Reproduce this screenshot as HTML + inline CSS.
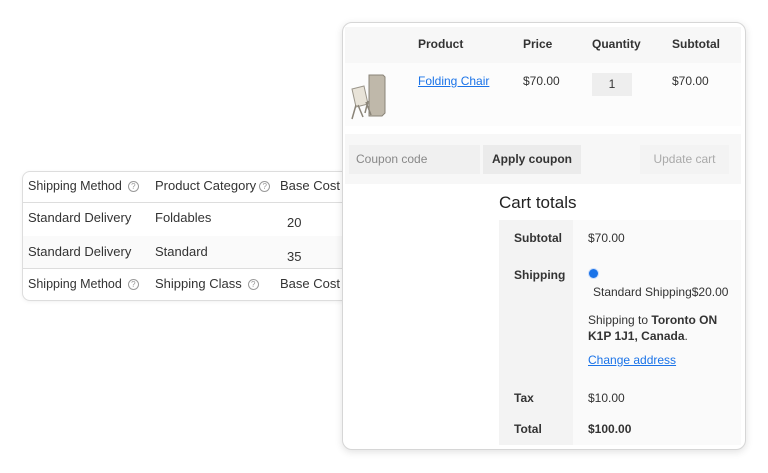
<!DOCTYPE html><html><head><style>
*{margin:0;padding:0;box-sizing:border-box}
body{width:768px;height:473px;background:#fff;position:relative;overflow:hidden;font-family:"Liberation Sans",Arial,sans-serif;color:#333;font-size:12px}
.a{position:absolute;white-space:nowrap}
.q{display:inline-block;width:11px;height:11px;border:1px solid #999;border-radius:50%;font-size:8px;line-height:9px;text-align:center;color:#999;vertical-align:1px;margin-left:6px}
.b{font-weight:bold}
a{color:#1a73e8;text-decoration:underline}
</style></head><body>
<div class="a" style="left:22px;top:171px;width:340px;height:130px;border:1px solid #ddd;border-radius:8px;background:#fff;box-shadow:0 1px 4px rgba(0,0,0,.06);font-size:13px">
 <div class="a" style="left:0;top:30px;width:340px;border-top:1px solid #ddd"></div>
 <div class="a" style="left:0;top:64px;width:340px;height:33px;background:#fafafa"></div>
 <div class="a" style="left:0;top:96px;width:340px;border-top:1px solid #ddd"></div>
 <div class="a" style="left:5px;top:7px;font-size:12.5px">Shipping Method<span class="q">?</span></div>
 <div class="a" style="left:132px;top:6px">Product Category<span class="q" style="margin-left:3px">?</span></div>
 <div class="a" style="left:257px;top:6px">Base Cost</div>
 <div class="a" style="left:5px;top:38px">Standard Delivery</div>
 <div class="a" style="left:132px;top:38px">Foldables</div>
 <div class="a" style="left:264px;top:43px">20</div>
 <div class="a" style="left:5px;top:72px">Standard Delivery</div>
 <div class="a" style="left:132px;top:72px">Standard</div>
 <div class="a" style="left:264px;top:77px">35</div>
 <div class="a" style="left:5px;top:105px;font-size:12.5px">Shipping Method<span class="q">?</span></div>
 <div class="a" style="left:132px;top:104px">Shipping Class<span class="q">?</span></div>
 <div class="a" style="left:257px;top:104px">Base Cost</div>
</div>
<div class="a" style="left:342px;top:22px;width:404px;height:428px;border:1px solid #d6d6d6;border-radius:10px;background:#fff;box-shadow:0 2px 8px rgba(0,0,0,.12)">
 <div class="a" style="left:2px;top:4px;width:396px;height:36px;background:#f7f7f7"></div>
 <div class="a" style="left:2px;top:40px;width:396px;height:63px;background:#fcfcfc"></div>
 <div class="a" style="left:2px;top:111px;width:396px;height:50px;background:#f7f7f7"></div>
 <div class="a b" style="left:75px;top:14px">Product</div>
 <div class="a b" style="left:180px;top:14px">Price</div>
 <div class="a b" style="left:249px;top:14px">Quantity</div>
 <div class="a b" style="left:329px;top:14px">Subtotal</div>
 <svg class="a" style="left:6px;top:48px" width="42" height="50" viewBox="0 0 42 50"><path d="M20 4h14l2 2v36l-3 3h-13z" fill="#bfb8aa" stroke="#8a8478"/><path d="M3 18l12-3 4 18-12 3z" fill="#e8e3d8" stroke="#9a958a"/><path d="M7 34l-4 14M9 34l5 12M17 31l5 13M19 30l-3 12" stroke="#8a8478" stroke-width="1.5"/></svg>
 <a class="a" style="left:75px;top:51px">Folding Chair</a>
 <div class="a" style="left:180px;top:51px">$70.00</div>
 <div class="a" style="left:249px;top:50px;width:40px;height:23px;background:#eee;text-align:center;line-height:23px">1</div>
 <div class="a" style="left:329px;top:51px">$70.00</div>
 <div class="a" style="left:6px;top:122px;width:131px;height:29px;background:#f0f0f0;color:#888;line-height:29px;padding-left:7px">Coupon code</div>
 <div class="a b" style="left:140px;top:122px;width:98px;height:29px;background:#ebebeb;line-height:29px;text-align:center">Apply coupon</div>
 <div class="a" style="left:297px;top:122px;width:89px;height:29px;background:#f3f3f3;color:#aaa;line-height:29px;text-align:center">Update cart</div>
 <div class="a" style="left:156px;top:170px;font-size:17px;font-weight:500;color:#222">Cart totals</div>
 <div class="a" style="left:156px;top:197px;width:242px;height:225px;background:#fafafa"></div>
 <div class="a" style="left:156px;top:197px;width:74px;height:225px;background:#f3f3f3"></div>
 <div class="a b" style="left:171px;top:208px">Subtotal</div>
 <div class="a" style="left:245px;top:208px">$70.00</div>
 <div class="a b" style="left:171px;top:245px">Shipping</div>
 <div class="a" style="left:246px;top:246px;width:9px;height:9px;border-radius:50%;background:#1a73e8;box-shadow:0 0 0 1px #cfe0fb"></div>
 <div class="a" style="left:250px;top:262px">Standard Shipping$20.00</div>
 <div class="a" style="left:245px;top:289px;line-height:16px">Shipping to <b>Toronto ON</b><br><b>K1P 1J1, Canada</b>.</div>
 <a class="a" style="left:245px;top:330px">Change address</a>
 <div class="a b" style="left:171px;top:368px">Tax</div>
 <div class="a" style="left:245px;top:368px">$10.00</div>
 <div class="a b" style="left:171px;top:399px">Total</div>
 <div class="a b" style="left:245px;top:399px">$100.00</div>
</div>
</body></html>
